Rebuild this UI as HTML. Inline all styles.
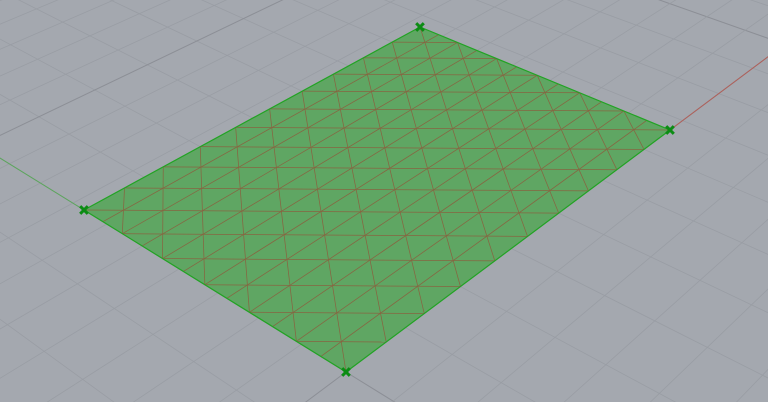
<!DOCTYPE html>
<html><head><meta charset="utf-8"><style>
html,body{margin:0;padding:0;background:#a4a8af;overflow:hidden;width:768px;height:402px}
svg{display:block}
</style></head><body>
<svg id="s" width="768" height="402" viewBox="0 0 768 402" xmlns="http://www.w3.org/2000/svg">
<rect width="768" height="402" fill="#a4a8af"/>
<g id="grid"></g>
<g id="axes"></g>
<polygon points="84,210 420,27 670,130 346,372" fill="#5fa663" stroke="none"/>
<g id="lat" opacity="0.85"></g>
<polygon points="84,210 420,27 670,130 346,372" fill="none" stroke="#22a324" stroke-width="1.2"/>
<g id="marks"></g>
</svg>
<script>
(function(){
var x0=84,y0=210,x1=420,y1=27,x2=670,y2=130,x3=346,y3=372;
var dx1=x1-x2,dx2=x3-x2,dx3=x0-x1+x2-x3,dy1=y1-y2,dy2=y3-y2,dy3=y0-y1+y2-y3;
var den=dx1*dy2-dx2*dy1;
var g=(dx3*dy2-dx2*dy3)/den,h=(dx1*dy3-dx3*dy1)/den;
var a=x1-x0+g*x1,b=x3-x0+h*x3,c=x0,d=y1-y0+g*y1,e=y3-y0+h*y3,f=y0;
function P(s,t){var w=g*s+h*t+1;return [(a*s+b*t+c)/w,(d*s+e*t+f)/w];}
var NS="http://www.w3.org/2000/svg";
function line(par,p,q,col,wd){var l=document.createElementNS(NS,"line");
l.setAttribute("x1",p[0].toFixed(2));l.setAttribute("y1",p[1].toFixed(2));
l.setAttribute("x2",q[0].toFixed(2));l.setAttribute("y2",q[1].toFixed(2));
l.setAttribute("stroke",col);l.setAttribute("stroke-width",wd);par.appendChild(l);}
var G=document.getElementById("grid");
var u=0.15,smin=-1.5,smax=3.6,tmin=-3.6,tmax=3.4;
function safe(s,t){return g*s+h*t+1>0.12;}
for(var k=-12;k<=25;k++){var s=k*u;if(s<smin||s>smax)continue;
 var ta=tmin,tb=tmax;while(!safe(s,tb))tb-=0.05;
 var maj=(k%10===0);line(G,P(s,ta),P(s,tb),maj?"#8c8f96":"#999da4",maj?1:0.8);}
for(var k=-20;k<=30;k++){var t=1-k*u;if(t<tmin||t>tmax)continue;
 var sa=smin,sb=smax;while(!safe(sa,t))sa+=0.05;
 var maj=(k%10===0);line(G,P(sa,t),P(sb,t),maj?"#8c8f96":"#999da4",maj?1:0.8);}
var A=document.getElementById("axes");
line(A,P(1,1),P(3.6,1),"#b0605a",1);
line(A,P(0,0),P(0,-3.6),"#5aa85a",1);
var L=document.getElementById("lat");var col="#8e5a3c",wd=0.75;
var R=12,D=0.1,C=0.6;
for(var k=1;k<R;k++){var t=k/R;line(L,P(0,t),P(1,t),col,wd);}
function diag(a0,cc){
 var lo=0,hi=1;
 if(cc>0){lo=Math.max(lo,(0-a0)/cc);hi=Math.min(hi,(1-a0)/cc);}
 else{lo=Math.max(lo,(1-a0)/cc);hi=Math.min(hi,(0-a0)/cc);}
 if(hi-lo<1e-6)return;
 line(L,P(a0+cc*lo,lo),P(a0+cc*hi,hi),col,wd);}
for(var m=-8;m<=12;m++){diag(m*D,C);}
for(var m=0;m<=18;m++){diag(m*D,-C);}
var M=document.getElementById("marks");
[[84,210],[420,27],[670,130],[346,372]].forEach(function(p){
 var r=3.8;line(M,[p[0]-r,p[1]-r],[p[0]+r,p[1]+r],"#0c8c14",3);
 line(M,[p[0]-r,p[1]+r],[p[0]+r,p[1]-r],"#0c8c14",3);});
})();
</script>
</body></html>
